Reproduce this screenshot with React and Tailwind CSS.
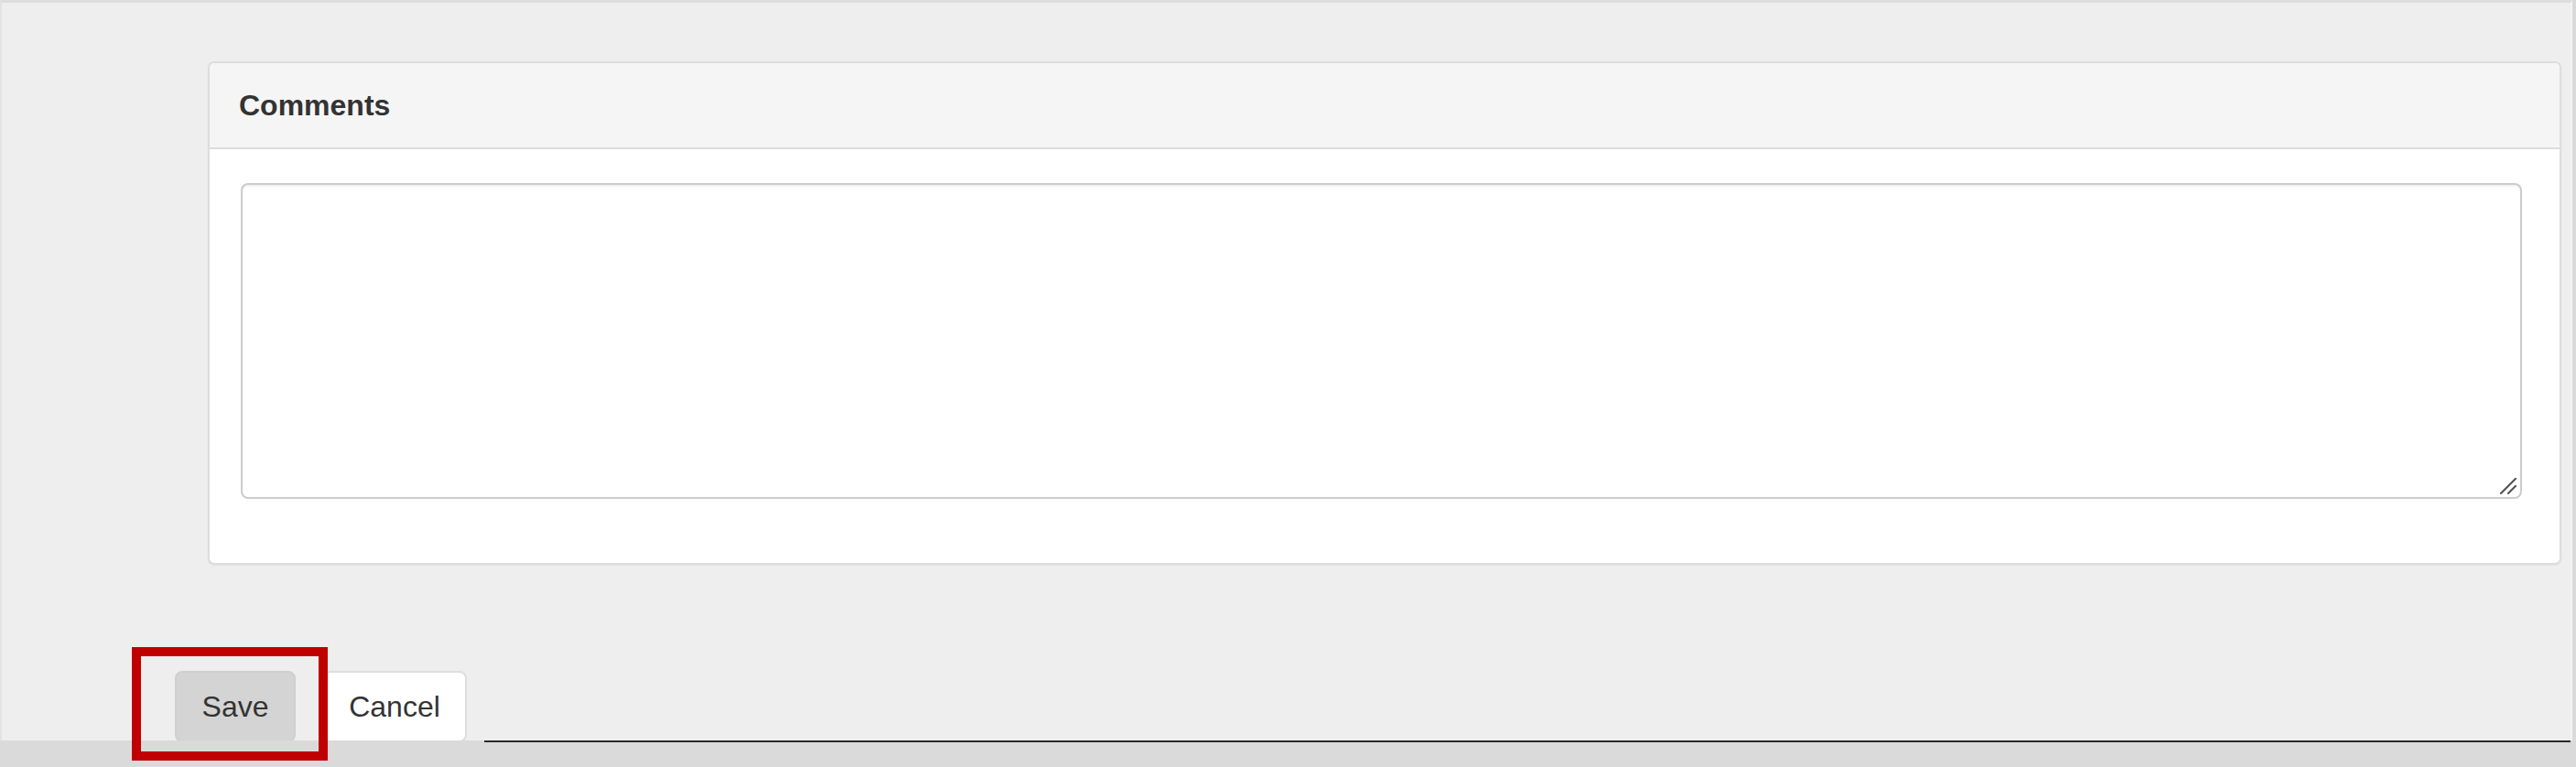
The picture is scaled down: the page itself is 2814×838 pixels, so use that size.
const ResizeGrip = () => (
  <svg
    className="absolute right-[6px] bottom-[5px] pointer-events-none"
    width="18"
    height="18"
    viewBox="0 0 18 18"
  >
    <line x1="1" y1="17" x2="17" y2="1" stroke="#555" strokeWidth="2.2" strokeLinecap="round" />
    <line x1="9" y1="17" x2="17" y2="9" stroke="#555" strokeWidth="2.2" strokeLinecap="round" />
  </svg>
);

const CommentsPanel = () => {
  return (
    <div className="mt-[64px] ml-[225px] w-[2571px] h-[550px] bg-white border-2 border-[#dddddd] rounded-[7px] shadow-[0_1px_2px_rgba(0,0,0,0.06)] overflow-hidden">
      <div className="h-[94px] bg-[#f5f5f5] border-b-2 border-[#dddddd] pl-[32px] flex items-center">
        <h3 className="text-[32px] font-bold text-[#333333] leading-none">Comments</h3>
      </div>
      <div className="pt-[37px] pl-[34px]">
        <div className="relative w-[2492px] h-[345px]">
          <textarea className="w-full h-full resize-none bg-white border-2 border-[#cccccc] rounded-[8px] shadow-[inset_0_2px_2px_rgba(0,0,0,0.06)] outline-none text-[28px] p-3" />
          <ResizeGrip />
        </div>
      </div>
    </div>
  );
};

export default function App() {
  return (
    <div
      className="relative w-[2814px] h-[838px] bg-[#dadada] overflow-hidden"
      style={{ fontFamily: '"Liberation Sans", Arial, sans-serif' }}
    >
      <div className="w-[2810px] h-[809px] bg-[#eeeeee] border-t-[3px] border-t-[#dddddd] border-l-2 border-l-[#e3e3e3] border-r-2 border-r-[#f3f3f3] overflow-hidden">
        <CommentsPanel />
        <div className="mt-[116px] ml-[189px] flex gap-[29px]">
          <button className="w-[132px] h-[78px] bg-[#d4d4d4] border-2 border-[#cfcfcf] rounded-[8px] text-[32px] text-[#333333] flex items-center justify-center">
            Save
          </button>
          <button className="w-[158px] h-[78px] bg-white border-2 border-[#dddddd] rounded-[8px] text-[32px] text-[#333333] flex items-center justify-center">
            Cancel
          </button>
        </div>
      </div>
      <div className="ml-[529px] w-[2279px] h-[2px] bg-[#2a2a2a]" />

      {/* annotation highlight */}
      <div className="absolute left-[144px] top-[707px] w-[214px] h-[124px] border-[10px] border-[#c00000] pointer-events-none" />
    </div>
  );
}
